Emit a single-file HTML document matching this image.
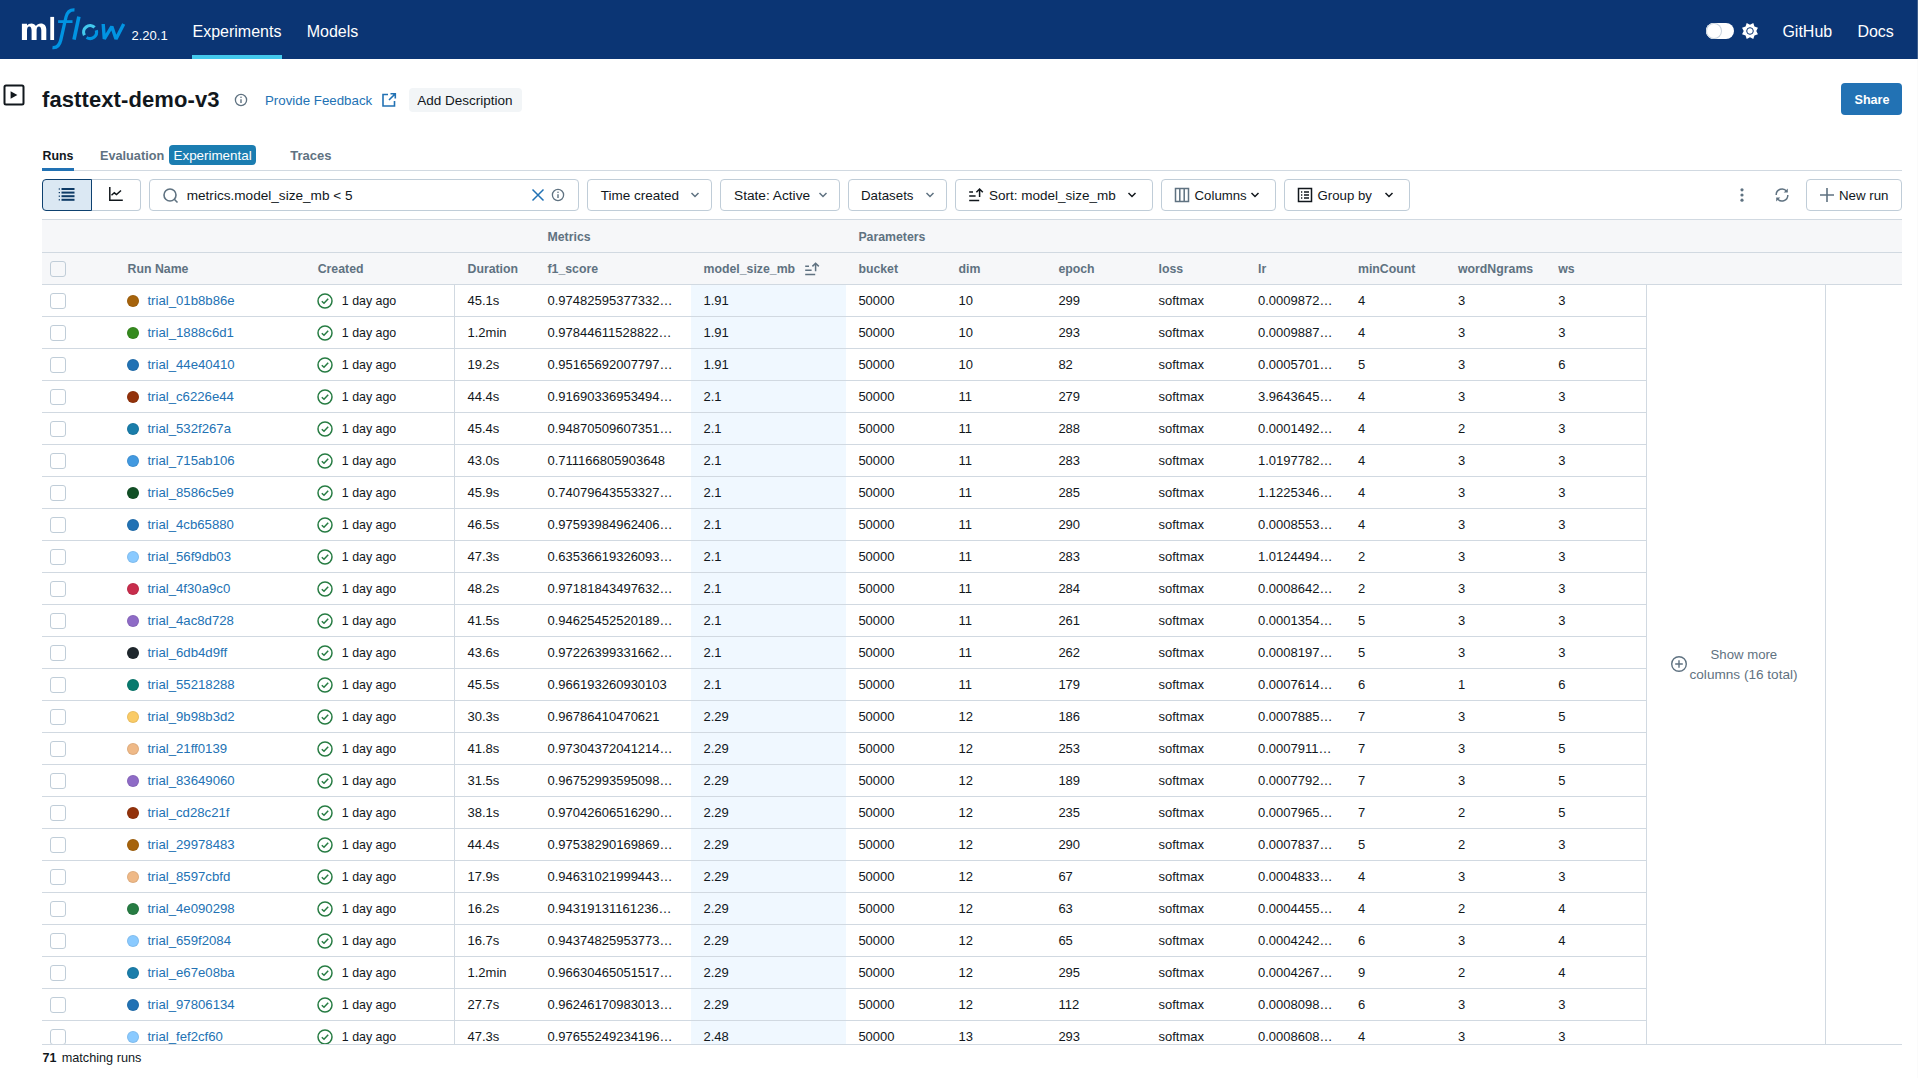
<!DOCTYPE html>
<html><head><meta charset="utf-8"><title>MLflow</title>
<style>
html,body{margin:0;padding:0;background:#fff;width:1918px;height:1078px;overflow:hidden;}
body{position:relative;font-family:"Liberation Sans", sans-serif;color:#11171C;}
.t{position:absolute;white-space:nowrap;}
.b{position:absolute;}
svg.b{overflow:visible}
</style></head><body>
<div class="b" style="left:0px;top:0px;width:1918px;height:59px;background:#0B3574"></div><svg class="b" style="left:18px;top:6px" width="112" height="46" viewBox="0 0 112 46" fill="none">
<g transform="translate(-18,-6)">
  <path d="M21.9 40 V23.8 H27 V25.6 C28 24.2 29.5 23.4 31.4 23.4 C33.4 23.4 35 24.3 35.9 26 C37 24.3 38.7 23.4 40.8 23.4 C44.2 23.4 46.3 25.6 46.3 29.6 V40 H41.3 V30.6 C41.3 27.9 40.4 26.4 38.9 26.4 C37.4 26.4 36.6 27.9 36.6 30.6 V40 H31.6 V30.6 C31.6 27.9 30.7 26.4 29.3 26.4 C27.8 26.4 27 27.9 27 30.6 V40 Z" fill="#fff"/>
  <path d="M50.3 16.9 H54.1 V40 H50.3 Z" fill="#fff"/>
  <path d="M52.5 47.5 C56.5 48 59.5 45.5 60.8 40 L66 17 C67.3 11.5 70 9.6 74.5 9.8" stroke="#0194E2" stroke-width="3.3" fill="none"/>
  <path d="M58.1 21.6 H72.5" stroke="#0194E2" stroke-width="2.8"/>
  <path d="M78.9 16.6 L74 39.7" stroke="#0194E2" stroke-width="3.6"/>
  <path d="M84.4 35.2 A6.5 6.5 0 0 1 94.6 27.4" stroke="#43C9ED" stroke-width="3.2" fill="none"/>
  <path d="M96.3 30.2 A6.5 6.5 0 0 1 86.6 37.5" stroke="#0194E2" stroke-width="3.2" fill="none"/>
  <path d="M103.2 24 L104.3 39 L111.8 26.5 L116 39 L123.7 24" stroke="#0194E2" stroke-width="3.4" fill="none" stroke-linejoin="bevel"/>
</g></svg><div class="t" style="left:131.5px;top:27px;font-size:13px;line-height:18px;color:#fff;">2.20.1</div><div class="t" style="left:192.5px;top:21px;font-size:16px;line-height:22px;color:#fff;">Experiments</div><div class="b" style="left:192px;top:55px;width:90px;height:4px;background:#43C9ED"></div><div class="t" style="left:306.7px;top:21px;font-size:16px;line-height:22px;color:#fff;">Models</div><div class="b" style="left:1706px;top:23px;width:28px;height:16px;background:#fff;border-radius:8px"></div><div class="b" style="left:1706px;top:23px;width:16px;height:16px;border-radius:50%;box-shadow:inset 0 0 0 1px #C9D3DD;background:#fff"></div><svg class="b" style="left:1741px;top:22px" width="18" height="18" viewBox="0 0 18 18" fill="none"><path d="M9.00 2.70 L12.29 1.05 L13.45 4.55 L16.95 5.71 L15.30 9.00 L16.95 12.29 L13.45 13.45 L12.29 16.95 L9.00 15.30 L5.71 16.95 L4.55 13.45 L1.05 12.29 L2.70 9.00 L1.05 5.71 L4.55 4.55 L5.71 1.05 Z" fill="#fff"/>
<circle cx="9" cy="9" r="3.3" stroke="#0B3574" stroke-width="1"/></svg><div class="t" style="left:1782.4px;top:21px;font-size:16px;line-height:22px;color:#fff;">GitHub</div><div class="t" style="left:1857.4px;top:21px;font-size:16px;line-height:22px;color:#fff;">Docs</div><div class="b" style="left:1917px;top:0px;width:1px;height:59px;background:#3F5F8C"></div><div class="b" style="left:1917px;top:59px;width:1px;height:1019px;background:#FBFBFB"></div><svg class="b" style="left:3px;top:84px" width="22" height="22" viewBox="0 0 22 22" fill="none"><rect x="1.5" y="1.5" width="19" height="19" rx="1.5" stroke="#11171C" stroke-width="2"/>
<path d="M7.6 7.2 L14.4 11 L7.6 14.8 Z" fill="#11171C"/></svg><div class="t" style="left:42px;top:84px;font-size:22px;line-height:31px;color:#11171C;font-weight:700;letter-spacing:0.1px;">fasttext-demo-v3</div><svg class="b" style="left:234px;top:93px" width="14" height="14" viewBox="0 0 14 14" fill="none"><circle cx="7" cy="7" r="5.6" stroke="#5F7281" stroke-width="1.3"/>
<path d="M7 6.2 V10" stroke="#5F7281" stroke-width="1.4"/><circle cx="7" cy="4.2" r="0.8" fill="#5F7281"/></svg><div class="t" style="left:265px;top:91px;font-size:13.3px;line-height:19px;color:#2272B4;">Provide Feedback</div><svg class="b" style="left:381px;top:92px" width="16" height="16" viewBox="0 0 16 16" fill="none"><path d="M7 2.5 H2 V14 H13.5 V9" stroke="#2272B4" stroke-width="1.6" fill="none"/>
<path d="M8 8 L14 2 M9.5 1.7 H14.3 V6.5" stroke="#2272B4" stroke-width="1.6" fill="none"/></svg><div class="b" style="left:409px;top:88px;width:113px;height:24px;background:#F2F5F7;border-radius:4px"></div><div class="t" style="left:417.3px;top:91px;font-size:13.5px;line-height:19px;color:#11171C;">Add Description</div><div class="b" style="left:1841px;top:83px;width:61px;height:32px;background:#2272B4;border-radius:4px"></div><div class="t" style="left:1854.5px;top:91px;font-size:12.6px;line-height:18px;color:#fff;font-weight:700;">Share</div><div class="t" style="left:42.5px;top:148px;font-size:12.4px;line-height:17px;color:#11171C;font-weight:700;">Runs</div><div class="b" style="left:42px;top:170px;width:1860px;height:1px;background:#D1D9E1"></div><div class="b" style="left:42px;top:168px;width:32px;height:3px;background:#2272B4"></div><div class="t" style="left:100px;top:147px;font-size:12.7px;line-height:18px;color:#5F7281;font-weight:700;">Evaluation</div><div class="b" style="left:169px;top:145px;width:87px;height:20px;background:#1B7DB1;border-radius:4px"></div><div class="t" style="left:173.5px;top:146px;font-size:13.4px;line-height:19px;color:#fff;">Experimental</div><div class="t" style="left:290.3px;top:147px;font-size:13px;line-height:18px;color:#5F7281;font-weight:700;">Traces</div><div class="b" style="left:91px;top:179px;width:50px;height:32px;box-sizing:border-box;border:1px solid #C0CDD8;border-left:none;border-radius:0 4px 4px 0;background:#fff"></div><div class="b" style="left:42px;top:179px;width:50px;height:32px;box-sizing:border-box;border:1px solid #0E4170;border-radius:4px 0 0 4px;background:#DBE8F3"></div><svg class="b" style="left:58px;top:187px" width="18" height="14" viewBox="0 0 18 14" fill="none"><g fill="#0E3B66">
<rect x="3.5" y="1" width="13" height="2"/><rect x="3.5" y="4.6" width="13" height="2"/><rect x="3.5" y="8.2" width="13" height="2"/><rect x="3.5" y="11.8" width="13" height="2"/>
<rect x="0.7" y="1.4" width="1.3" height="1.2"/><rect x="0.7" y="5" width="1.3" height="1.2"/><rect x="0.7" y="8.6" width="1.3" height="1.2"/><rect x="0.7" y="12.2" width="1.3" height="1.2"/>
</g></svg><svg class="b" style="left:108px;top:186px" width="16" height="16" viewBox="0 0 16 16" fill="none"><path d="M1.8 1 V14.2 H14.8" stroke="#11171C" stroke-width="1.5" fill="none"/>
<path d="M3.5 9.2 L6.3 6.8 L8.5 8.6 L13 4.5" stroke="#11171C" stroke-width="1.5" fill="none"/></svg><div class="b" style="left:149px;top:179px;width:430px;height:32px;box-sizing:border-box;border:1px solid #C0CDD8;border-radius:4px;background:#fff"></div><svg class="b" style="left:162px;top:187px" width="18" height="18" viewBox="0 0 18 18" fill="none"><circle cx="8" cy="8" r="6" stroke="#5F7281" stroke-width="1.6"/><path d="M12.3 12.3 L15.5 15.5" stroke="#5F7281" stroke-width="1.6"/></svg><div class="t" style="left:186.7px;top:186px;font-size:13.6px;line-height:19px;color:#11171C;">metrics.model_size_mb &lt; 5</div><svg class="b" style="left:531px;top:188px" width="14" height="14" viewBox="0 0 14 14" fill="none"><path d="M1.5 1.5 L12.5 12.5 M12.5 1.5 L1.5 12.5" stroke="#2272B4" stroke-width="1.5"/></svg><svg class="b" style="left:551px;top:188px" width="14" height="14" viewBox="0 0 14 14" fill="none"><circle cx="7" cy="7" r="5.6" stroke="#5F7281" stroke-width="1.3"/>
<path d="M7 6.2 V10" stroke="#5F7281" stroke-width="1.4"/><circle cx="7" cy="4.2" r="0.8" fill="#5F7281"/></svg><div class="b" style="left:587px;top:179px;width:125px;height:32px;box-sizing:border-box;border:1px solid #C0CDD8;border-radius:4px;background:#fff"></div><div class="t" style="left:600.7px;top:186px;font-size:13.5px;line-height:19px;color:#11171C;">Time created</div><svg class="b" style="left:690px;top:191px" width="10" height="8" viewBox="0 0 10 8" fill="none"><path d="M1.5 2 L5 5.5 L8.5 2" stroke="#5F7281" stroke-width="1.5" fill="none"/></svg><div class="b" style="left:720px;top:179px;width:120px;height:32px;box-sizing:border-box;border:1px solid #C0CDD8;border-radius:4px;background:#fff"></div><div class="t" style="left:734px;top:186px;font-size:13.7px;line-height:19px;color:#11171C;">State: Active</div><svg class="b" style="left:818px;top:191px" width="10" height="8" viewBox="0 0 10 8" fill="none"><path d="M1.5 2 L5 5.5 L8.5 2" stroke="#5F7281" stroke-width="1.5" fill="none"/></svg><div class="b" style="left:848px;top:179px;width:99px;height:32px;box-sizing:border-box;border:1px solid #C0CDD8;border-radius:4px;background:#fff"></div><div class="t" style="left:861px;top:186px;font-size:13.3px;line-height:19px;color:#11171C;">Datasets</div><svg class="b" style="left:925px;top:191px" width="10" height="8" viewBox="0 0 10 8" fill="none"><path d="M1.5 2 L5 5.5 L8.5 2" stroke="#5F7281" stroke-width="1.5" fill="none"/></svg><div class="b" style="left:955px;top:179px;width:198px;height:32px;box-sizing:border-box;border:1px solid #C0CDD8;border-radius:4px;background:#fff"></div><svg class="b" style="left:968px;top:187px" width="17" height="15" viewBox="0 0 17 15" fill="none"><g transform="translate(1,0.8)"><path d="M0.2 4.2 H4 M0.2 8.3 H6.6 M0.2 12.6 H10.2" stroke="#11171C" stroke-width="1.5"/>
<path d="M10.6 9.2 V1.4 M7.4 4.4 L10.6 1.2 L13.8 4.4" stroke="#11171C" stroke-width="1.5" fill="none"/></g></svg><div class="t" style="left:989px;top:186px;font-size:13.5px;line-height:19px;color:#11171C;">Sort: model_size_mb</div><svg class="b" style="left:1127px;top:191px" width="10" height="8" viewBox="0 0 10 8" fill="none"><path d="M1.5 2 L5 5.5 L8.5 2" stroke="#11171C" stroke-width="1.5" fill="none"/></svg><div class="b" style="left:1161px;top:179px;width:115px;height:32px;box-sizing:border-box;border:1px solid #C0CDD8;border-radius:4px;background:#fff"></div><svg class="b" style="left:1174px;top:187px" width="16" height="16" viewBox="0 0 16 16" fill="none"><rect x="1.5" y="1.5" width="13" height="13" stroke="#5F7281" stroke-width="1.5"/>
<path d="M5.8 1.5 V14.5 M10.2 1.5 V14.5" stroke="#5F7281" stroke-width="1.5"/></svg><div class="t" style="left:1194.6px;top:187px;font-size:13.2px;line-height:18px;color:#11171C;">Columns</div><svg class="b" style="left:1250px;top:191px" width="10" height="8" viewBox="0 0 10 8" fill="none"><path d="M1.5 2 L5 5.5 L8.5 2" stroke="#11171C" stroke-width="1.5" fill="none"/></svg><div class="b" style="left:1284px;top:179px;width:126px;height:32px;box-sizing:border-box;border:1px solid #C0CDD8;border-radius:4px;background:#fff"></div><svg class="b" style="left:1297px;top:187px" width="16" height="16" viewBox="0 0 16 16" fill="none"><rect x="1.5" y="1.5" width="13" height="13" stroke="#11171C" stroke-width="1.5"/>
<path d="M7 5 H12 M7 8 H12 M7 11 H12 M4 5 H5.3 M4 8 H5.3 M4 11 H5.3" stroke="#11171C" stroke-width="1.3"/></svg><div class="t" style="left:1317.6px;top:187px;font-size:13.2px;line-height:18px;color:#11171C;">Group by</div><svg class="b" style="left:1384px;top:191px" width="10" height="8" viewBox="0 0 10 8" fill="none"><path d="M1.5 2 L5 5.5 L8.5 2" stroke="#11171C" stroke-width="1.5" fill="none"/></svg><svg class="b" style="left:1739px;top:187px" width="6" height="16" viewBox="0 0 6 16" fill="none"><g fill="#5F7281"><circle cx="3" cy="2.8" r="1.6"/><circle cx="3" cy="8" r="1.6"/><circle cx="3" cy="13.2" r="1.6"/></g></svg><svg class="b" style="left:1774px;top:187px" width="16" height="16" viewBox="0 0 16 16" fill="none"><path d="M2.2 8 A5.8 5.8 0 0 1 12.8 4.6 M13.8 8 A5.8 5.8 0 0 1 3.2 11.4" stroke="#5F7281" stroke-width="1.5" fill="none"/>
<path d="M13.8 1.5 V5.6 H9.7 Z M2.2 14.5 V10.4 H6.3 Z" fill="#5F7281"/></svg><div class="b" style="left:1806px;top:179px;width:96px;height:32px;box-sizing:border-box;border:1px solid #C0CDD8;border-radius:4px;background:#fff"></div><svg class="b" style="left:1819px;top:187px" width="16" height="16" viewBox="0 0 16 16" fill="none"><path d="M8 1 V15 M1 8 H15" stroke="#5F7281" stroke-width="1.6"/></svg><div class="t" style="left:1839px;top:186px;font-size:13.3px;line-height:19px;color:#11171C;">New run</div><div class="b" style="left:42px;top:219px;width:1860px;height:1px;background:#D1D9E1"></div><div class="b" style="left:42px;top:220px;width:1860px;height:64px;background:#F6F7F9"></div><div class="b" style="left:42px;top:252px;width:1860px;height:1px;background:#D1D9E1"></div><div class="b" style="left:42px;top:284px;width:1860px;height:1px;background:#D1D9E1"></div><div class="t" style="left:547.5px;top:229px;font-size:12.3px;line-height:17px;color:#5F7281;font-weight:700;">Metrics</div><div class="t" style="left:858.4px;top:229px;font-size:12.3px;line-height:17px;color:#5F7281;font-weight:700;">Parameters</div><div class="b" style="left:50px;top:261px;width:16px;height:16px;box-sizing:border-box;border:1px solid #C0CDD8;border-radius:3px;background:transparent"></div><div class="t" style="left:127.6px;top:261px;font-size:12.3px;line-height:17px;color:#5F7281;font-weight:700;">Run Name</div><div class="t" style="left:317.7px;top:261px;font-size:12.3px;line-height:17px;color:#5F7281;font-weight:700;">Created</div><div class="t" style="left:467.5px;top:261px;font-size:12.3px;line-height:17px;color:#5F7281;font-weight:700;">Duration</div><div class="t" style="left:547.5px;top:261px;font-size:12.3px;line-height:17px;color:#5F7281;font-weight:700;">f1_score</div><div class="t" style="left:703.5px;top:261px;font-size:12.3px;line-height:17px;color:#5F7281;font-weight:700;">model_size_mb</div><div class="t" style="left:858.4px;top:261px;font-size:12.3px;line-height:17px;color:#5F7281;font-weight:700;">bucket</div><div class="t" style="left:958.5px;top:261px;font-size:12.3px;line-height:17px;color:#5F7281;font-weight:700;">dim</div><div class="t" style="left:1058.4px;top:261px;font-size:12.3px;line-height:17px;color:#5F7281;font-weight:700;">epoch</div><div class="t" style="left:1158.5px;top:261px;font-size:12.3px;line-height:17px;color:#5F7281;font-weight:700;">loss</div><div class="t" style="left:1258px;top:261px;font-size:12.3px;line-height:17px;color:#5F7281;font-weight:700;">lr</div><div class="t" style="left:1358px;top:261px;font-size:12.3px;line-height:17px;color:#5F7281;font-weight:700;">minCount</div><div class="t" style="left:1458px;top:261px;font-size:12.3px;line-height:17px;color:#5F7281;font-weight:700;">wordNgrams</div><div class="t" style="left:1558.3px;top:261px;font-size:12.3px;line-height:17px;color:#5F7281;font-weight:700;">ws</div><svg class="b" style="left:804px;top:261px" width="17" height="15" viewBox="0 0 17 15" fill="none"><g transform="translate(1,1)"><path d="M0.2 4.2 H4 M0.2 8.3 H6.6 M0.2 12.6 H10.2" stroke="#5F7281" stroke-width="1.5"/>
<path d="M10.6 9.2 V1.4 M7.4 4.4 L10.6 1.2 L13.8 4.4" stroke="#5F7281" stroke-width="1.5" fill="none"/></g></svg><div class="b" style="left:0;top:285px;width:1918px;height:759px;overflow:hidden"><div class="b" style="left:691px;top:0px;width:155px;height:1000px;background:#F0F8FF"></div><div class="b" style="left:454px;top:0px;width:1px;height:1000px;background:#D1D9E1"></div><div class="b" style="left:1646px;top:0px;width:1px;height:1000px;background:#D1D9E1"></div><div class="b" style="left:1825px;top:0px;width:1px;height:1000px;background:#D1D9E1"></div><div class="b" style="left:50px;top:8px;width:16px;height:16px;box-sizing:border-box;border:1px solid #C0CDD8;border-radius:3px;background:#fff"></div><div class="b" style="left:127px;top:10px;width:12px;height:12px;border-radius:50%;background:#A6630C;box-shadow:inset 0 0 0 1px rgba(0,0,0,0.07)"></div><div class="t" style="left:147.4px;top:7px;font-size:13.2px;line-height:18px;color:#2272B4;">trial_01b8b86e</div><svg class="b" style="left:317px;top:8px" width="16" height="16" viewBox="0 0 16 16" fill="none"><circle cx="8" cy="8" r="7" stroke="#277C43" stroke-width="1.5"/><path d="M4.8 8.2 L7 10.3 L11.2 5.8" stroke="#277C43" stroke-width="1.5" fill="none"/></svg><div class="t" style="left:341.8px;top:8px;font-size:12.4px;line-height:17px;color:#11171C;">1 day ago</div><div class="t" style="left:467.5px;top:7px;font-size:13px;line-height:18px;color:#11171C;">45.1s</div><div class="t" style="left:547.5px;top:7px;font-size:13px;line-height:18px;color:#11171C;">0.97482595377332…</div><div class="t" style="left:703.5px;top:7px;font-size:13px;line-height:18px;color:#11171C;">1.91</div><div class="t" style="left:858.4px;top:7px;font-size:13px;line-height:18px;color:#11171C;">50000</div><div class="t" style="left:958.5px;top:7px;font-size:13px;line-height:18px;color:#11171C;">10</div><div class="t" style="left:1058.4px;top:7px;font-size:13px;line-height:18px;color:#11171C;">299</div><div class="t" style="left:1158.5px;top:7px;font-size:13px;line-height:18px;color:#11171C;">softmax</div><div class="t" style="left:1258px;top:7px;font-size:13px;line-height:18px;color:#11171C;">0.0009872…</div><div class="t" style="left:1358px;top:7px;font-size:13px;line-height:18px;color:#11171C;">4</div><div class="t" style="left:1458px;top:7px;font-size:13px;line-height:18px;color:#11171C;">3</div><div class="t" style="left:1558.3px;top:7px;font-size:13px;line-height:18px;color:#11171C;">3</div><div class="b" style="left:42px;top:31px;width:1604px;height:1px;background:#D1D9E1"></div><div class="b" style="left:50px;top:40px;width:16px;height:16px;box-sizing:border-box;border:1px solid #C0CDD8;border-radius:3px;background:#fff"></div><div class="b" style="left:127px;top:42px;width:12px;height:12px;border-radius:50%;background:#358A1E;box-shadow:inset 0 0 0 1px rgba(0,0,0,0.07)"></div><div class="t" style="left:147.4px;top:39px;font-size:13.2px;line-height:18px;color:#2272B4;">trial_1888c6d1</div><svg class="b" style="left:317px;top:40px" width="16" height="16" viewBox="0 0 16 16" fill="none"><circle cx="8" cy="8" r="7" stroke="#277C43" stroke-width="1.5"/><path d="M4.8 8.2 L7 10.3 L11.2 5.8" stroke="#277C43" stroke-width="1.5" fill="none"/></svg><div class="t" style="left:341.8px;top:40px;font-size:12.4px;line-height:17px;color:#11171C;">1 day ago</div><div class="t" style="left:467.5px;top:39px;font-size:13px;line-height:18px;color:#11171C;">1.2min</div><div class="t" style="left:547.5px;top:39px;font-size:13px;line-height:18px;color:#11171C;">0.97844611528822…</div><div class="t" style="left:703.5px;top:39px;font-size:13px;line-height:18px;color:#11171C;">1.91</div><div class="t" style="left:858.4px;top:39px;font-size:13px;line-height:18px;color:#11171C;">50000</div><div class="t" style="left:958.5px;top:39px;font-size:13px;line-height:18px;color:#11171C;">10</div><div class="t" style="left:1058.4px;top:39px;font-size:13px;line-height:18px;color:#11171C;">293</div><div class="t" style="left:1158.5px;top:39px;font-size:13px;line-height:18px;color:#11171C;">softmax</div><div class="t" style="left:1258px;top:39px;font-size:13px;line-height:18px;color:#11171C;">0.0009887…</div><div class="t" style="left:1358px;top:39px;font-size:13px;line-height:18px;color:#11171C;">4</div><div class="t" style="left:1458px;top:39px;font-size:13px;line-height:18px;color:#11171C;">3</div><div class="t" style="left:1558.3px;top:39px;font-size:13px;line-height:18px;color:#11171C;">3</div><div class="b" style="left:42px;top:63px;width:1604px;height:1px;background:#D1D9E1"></div><div class="b" style="left:50px;top:72px;width:16px;height:16px;box-sizing:border-box;border:1px solid #C0CDD8;border-radius:3px;background:#fff"></div><div class="b" style="left:127px;top:74px;width:12px;height:12px;border-radius:50%;background:#2272B4;box-shadow:inset 0 0 0 1px rgba(0,0,0,0.07)"></div><div class="t" style="left:147.4px;top:71px;font-size:13.2px;line-height:18px;color:#2272B4;">trial_44e40410</div><svg class="b" style="left:317px;top:72px" width="16" height="16" viewBox="0 0 16 16" fill="none"><circle cx="8" cy="8" r="7" stroke="#277C43" stroke-width="1.5"/><path d="M4.8 8.2 L7 10.3 L11.2 5.8" stroke="#277C43" stroke-width="1.5" fill="none"/></svg><div class="t" style="left:341.8px;top:72px;font-size:12.4px;line-height:17px;color:#11171C;">1 day ago</div><div class="t" style="left:467.5px;top:71px;font-size:13px;line-height:18px;color:#11171C;">19.2s</div><div class="t" style="left:547.5px;top:71px;font-size:13px;line-height:18px;color:#11171C;">0.95165692007797…</div><div class="t" style="left:703.5px;top:71px;font-size:13px;line-height:18px;color:#11171C;">1.91</div><div class="t" style="left:858.4px;top:71px;font-size:13px;line-height:18px;color:#11171C;">50000</div><div class="t" style="left:958.5px;top:71px;font-size:13px;line-height:18px;color:#11171C;">10</div><div class="t" style="left:1058.4px;top:71px;font-size:13px;line-height:18px;color:#11171C;">82</div><div class="t" style="left:1158.5px;top:71px;font-size:13px;line-height:18px;color:#11171C;">softmax</div><div class="t" style="left:1258px;top:71px;font-size:13px;line-height:18px;color:#11171C;">0.0005701…</div><div class="t" style="left:1358px;top:71px;font-size:13px;line-height:18px;color:#11171C;">5</div><div class="t" style="left:1458px;top:71px;font-size:13px;line-height:18px;color:#11171C;">3</div><div class="t" style="left:1558.3px;top:71px;font-size:13px;line-height:18px;color:#11171C;">6</div><div class="b" style="left:42px;top:95px;width:1604px;height:1px;background:#D1D9E1"></div><div class="b" style="left:50px;top:104px;width:16px;height:16px;box-sizing:border-box;border:1px solid #C0CDD8;border-radius:3px;background:#fff"></div><div class="b" style="left:127px;top:106px;width:12px;height:12px;border-radius:50%;background:#93320B;box-shadow:inset 0 0 0 1px rgba(0,0,0,0.07)"></div><div class="t" style="left:147.4px;top:103px;font-size:13.2px;line-height:18px;color:#2272B4;">trial_c6226e44</div><svg class="b" style="left:317px;top:104px" width="16" height="16" viewBox="0 0 16 16" fill="none"><circle cx="8" cy="8" r="7" stroke="#277C43" stroke-width="1.5"/><path d="M4.8 8.2 L7 10.3 L11.2 5.8" stroke="#277C43" stroke-width="1.5" fill="none"/></svg><div class="t" style="left:341.8px;top:104px;font-size:12.4px;line-height:17px;color:#11171C;">1 day ago</div><div class="t" style="left:467.5px;top:103px;font-size:13px;line-height:18px;color:#11171C;">44.4s</div><div class="t" style="left:547.5px;top:103px;font-size:13px;line-height:18px;color:#11171C;">0.91690336953494…</div><div class="t" style="left:703.5px;top:103px;font-size:13px;line-height:18px;color:#11171C;">2.1</div><div class="t" style="left:858.4px;top:103px;font-size:13px;line-height:18px;color:#11171C;">50000</div><div class="t" style="left:958.5px;top:103px;font-size:13px;line-height:18px;color:#11171C;">11</div><div class="t" style="left:1058.4px;top:103px;font-size:13px;line-height:18px;color:#11171C;">279</div><div class="t" style="left:1158.5px;top:103px;font-size:13px;line-height:18px;color:#11171C;">softmax</div><div class="t" style="left:1258px;top:103px;font-size:13px;line-height:18px;color:#11171C;">3.9643645…</div><div class="t" style="left:1358px;top:103px;font-size:13px;line-height:18px;color:#11171C;">4</div><div class="t" style="left:1458px;top:103px;font-size:13px;line-height:18px;color:#11171C;">3</div><div class="t" style="left:1558.3px;top:103px;font-size:13px;line-height:18px;color:#11171C;">3</div><div class="b" style="left:42px;top:127px;width:1604px;height:1px;background:#D1D9E1"></div><div class="b" style="left:50px;top:136px;width:16px;height:16px;box-sizing:border-box;border:1px solid #C0CDD8;border-radius:3px;background:#fff"></div><div class="b" style="left:127px;top:138px;width:12px;height:12px;border-radius:50%;background:#1A7DAA;box-shadow:inset 0 0 0 1px rgba(0,0,0,0.07)"></div><div class="t" style="left:147.4px;top:135px;font-size:13.2px;line-height:18px;color:#2272B4;">trial_532f267a</div><svg class="b" style="left:317px;top:136px" width="16" height="16" viewBox="0 0 16 16" fill="none"><circle cx="8" cy="8" r="7" stroke="#277C43" stroke-width="1.5"/><path d="M4.8 8.2 L7 10.3 L11.2 5.8" stroke="#277C43" stroke-width="1.5" fill="none"/></svg><div class="t" style="left:341.8px;top:136px;font-size:12.4px;line-height:17px;color:#11171C;">1 day ago</div><div class="t" style="left:467.5px;top:135px;font-size:13px;line-height:18px;color:#11171C;">45.4s</div><div class="t" style="left:547.5px;top:135px;font-size:13px;line-height:18px;color:#11171C;">0.94870509607351…</div><div class="t" style="left:703.5px;top:135px;font-size:13px;line-height:18px;color:#11171C;">2.1</div><div class="t" style="left:858.4px;top:135px;font-size:13px;line-height:18px;color:#11171C;">50000</div><div class="t" style="left:958.5px;top:135px;font-size:13px;line-height:18px;color:#11171C;">11</div><div class="t" style="left:1058.4px;top:135px;font-size:13px;line-height:18px;color:#11171C;">288</div><div class="t" style="left:1158.5px;top:135px;font-size:13px;line-height:18px;color:#11171C;">softmax</div><div class="t" style="left:1258px;top:135px;font-size:13px;line-height:18px;color:#11171C;">0.0001492…</div><div class="t" style="left:1358px;top:135px;font-size:13px;line-height:18px;color:#11171C;">4</div><div class="t" style="left:1458px;top:135px;font-size:13px;line-height:18px;color:#11171C;">2</div><div class="t" style="left:1558.3px;top:135px;font-size:13px;line-height:18px;color:#11171C;">3</div><div class="b" style="left:42px;top:159px;width:1604px;height:1px;background:#D1D9E1"></div><div class="b" style="left:50px;top:168px;width:16px;height:16px;box-sizing:border-box;border:1px solid #C0CDD8;border-radius:3px;background:#fff"></div><div class="b" style="left:127px;top:170px;width:12px;height:12px;border-radius:50%;background:#4299E0;box-shadow:inset 0 0 0 1px rgba(0,0,0,0.07)"></div><div class="t" style="left:147.4px;top:167px;font-size:13.2px;line-height:18px;color:#2272B4;">trial_715ab106</div><svg class="b" style="left:317px;top:168px" width="16" height="16" viewBox="0 0 16 16" fill="none"><circle cx="8" cy="8" r="7" stroke="#277C43" stroke-width="1.5"/><path d="M4.8 8.2 L7 10.3 L11.2 5.8" stroke="#277C43" stroke-width="1.5" fill="none"/></svg><div class="t" style="left:341.8px;top:168px;font-size:12.4px;line-height:17px;color:#11171C;">1 day ago</div><div class="t" style="left:467.5px;top:167px;font-size:13px;line-height:18px;color:#11171C;">43.0s</div><div class="t" style="left:547.5px;top:167px;font-size:13px;line-height:18px;color:#11171C;">0.711166805903648</div><div class="t" style="left:703.5px;top:167px;font-size:13px;line-height:18px;color:#11171C;">2.1</div><div class="t" style="left:858.4px;top:167px;font-size:13px;line-height:18px;color:#11171C;">50000</div><div class="t" style="left:958.5px;top:167px;font-size:13px;line-height:18px;color:#11171C;">11</div><div class="t" style="left:1058.4px;top:167px;font-size:13px;line-height:18px;color:#11171C;">283</div><div class="t" style="left:1158.5px;top:167px;font-size:13px;line-height:18px;color:#11171C;">softmax</div><div class="t" style="left:1258px;top:167px;font-size:13px;line-height:18px;color:#11171C;">1.0197782…</div><div class="t" style="left:1358px;top:167px;font-size:13px;line-height:18px;color:#11171C;">4</div><div class="t" style="left:1458px;top:167px;font-size:13px;line-height:18px;color:#11171C;">3</div><div class="t" style="left:1558.3px;top:167px;font-size:13px;line-height:18px;color:#11171C;">3</div><div class="b" style="left:42px;top:191px;width:1604px;height:1px;background:#D1D9E1"></div><div class="b" style="left:50px;top:200px;width:16px;height:16px;box-sizing:border-box;border:1px solid #C0CDD8;border-radius:3px;background:#fff"></div><div class="b" style="left:127px;top:202px;width:12px;height:12px;border-radius:50%;background:#115026;box-shadow:inset 0 0 0 1px rgba(0,0,0,0.07)"></div><div class="t" style="left:147.4px;top:199px;font-size:13.2px;line-height:18px;color:#2272B4;">trial_8586c5e9</div><svg class="b" style="left:317px;top:200px" width="16" height="16" viewBox="0 0 16 16" fill="none"><circle cx="8" cy="8" r="7" stroke="#277C43" stroke-width="1.5"/><path d="M4.8 8.2 L7 10.3 L11.2 5.8" stroke="#277C43" stroke-width="1.5" fill="none"/></svg><div class="t" style="left:341.8px;top:200px;font-size:12.4px;line-height:17px;color:#11171C;">1 day ago</div><div class="t" style="left:467.5px;top:199px;font-size:13px;line-height:18px;color:#11171C;">45.9s</div><div class="t" style="left:547.5px;top:199px;font-size:13px;line-height:18px;color:#11171C;">0.74079643553327…</div><div class="t" style="left:703.5px;top:199px;font-size:13px;line-height:18px;color:#11171C;">2.1</div><div class="t" style="left:858.4px;top:199px;font-size:13px;line-height:18px;color:#11171C;">50000</div><div class="t" style="left:958.5px;top:199px;font-size:13px;line-height:18px;color:#11171C;">11</div><div class="t" style="left:1058.4px;top:199px;font-size:13px;line-height:18px;color:#11171C;">285</div><div class="t" style="left:1158.5px;top:199px;font-size:13px;line-height:18px;color:#11171C;">softmax</div><div class="t" style="left:1258px;top:199px;font-size:13px;line-height:18px;color:#11171C;">1.1225346…</div><div class="t" style="left:1358px;top:199px;font-size:13px;line-height:18px;color:#11171C;">4</div><div class="t" style="left:1458px;top:199px;font-size:13px;line-height:18px;color:#11171C;">3</div><div class="t" style="left:1558.3px;top:199px;font-size:13px;line-height:18px;color:#11171C;">3</div><div class="b" style="left:42px;top:223px;width:1604px;height:1px;background:#D1D9E1"></div><div class="b" style="left:50px;top:232px;width:16px;height:16px;box-sizing:border-box;border:1px solid #C0CDD8;border-radius:3px;background:#fff"></div><div class="b" style="left:127px;top:234px;width:12px;height:12px;border-radius:50%;background:#2272B4;box-shadow:inset 0 0 0 1px rgba(0,0,0,0.07)"></div><div class="t" style="left:147.4px;top:231px;font-size:13.2px;line-height:18px;color:#2272B4;">trial_4cb65880</div><svg class="b" style="left:317px;top:232px" width="16" height="16" viewBox="0 0 16 16" fill="none"><circle cx="8" cy="8" r="7" stroke="#277C43" stroke-width="1.5"/><path d="M4.8 8.2 L7 10.3 L11.2 5.8" stroke="#277C43" stroke-width="1.5" fill="none"/></svg><div class="t" style="left:341.8px;top:232px;font-size:12.4px;line-height:17px;color:#11171C;">1 day ago</div><div class="t" style="left:467.5px;top:231px;font-size:13px;line-height:18px;color:#11171C;">46.5s</div><div class="t" style="left:547.5px;top:231px;font-size:13px;line-height:18px;color:#11171C;">0.97593984962406…</div><div class="t" style="left:703.5px;top:231px;font-size:13px;line-height:18px;color:#11171C;">2.1</div><div class="t" style="left:858.4px;top:231px;font-size:13px;line-height:18px;color:#11171C;">50000</div><div class="t" style="left:958.5px;top:231px;font-size:13px;line-height:18px;color:#11171C;">11</div><div class="t" style="left:1058.4px;top:231px;font-size:13px;line-height:18px;color:#11171C;">290</div><div class="t" style="left:1158.5px;top:231px;font-size:13px;line-height:18px;color:#11171C;">softmax</div><div class="t" style="left:1258px;top:231px;font-size:13px;line-height:18px;color:#11171C;">0.0008553…</div><div class="t" style="left:1358px;top:231px;font-size:13px;line-height:18px;color:#11171C;">4</div><div class="t" style="left:1458px;top:231px;font-size:13px;line-height:18px;color:#11171C;">3</div><div class="t" style="left:1558.3px;top:231px;font-size:13px;line-height:18px;color:#11171C;">3</div><div class="b" style="left:42px;top:255px;width:1604px;height:1px;background:#D1D9E1"></div><div class="b" style="left:50px;top:264px;width:16px;height:16px;box-sizing:border-box;border:1px solid #C0CDD8;border-radius:3px;background:#fff"></div><div class="b" style="left:127px;top:266px;width:12px;height:12px;border-radius:50%;background:#8ACAFF;box-shadow:inset 0 0 0 1px rgba(0,0,0,0.07)"></div><div class="t" style="left:147.4px;top:263px;font-size:13.2px;line-height:18px;color:#2272B4;">trial_56f9db03</div><svg class="b" style="left:317px;top:264px" width="16" height="16" viewBox="0 0 16 16" fill="none"><circle cx="8" cy="8" r="7" stroke="#277C43" stroke-width="1.5"/><path d="M4.8 8.2 L7 10.3 L11.2 5.8" stroke="#277C43" stroke-width="1.5" fill="none"/></svg><div class="t" style="left:341.8px;top:264px;font-size:12.4px;line-height:17px;color:#11171C;">1 day ago</div><div class="t" style="left:467.5px;top:263px;font-size:13px;line-height:18px;color:#11171C;">47.3s</div><div class="t" style="left:547.5px;top:263px;font-size:13px;line-height:18px;color:#11171C;">0.63536619326093…</div><div class="t" style="left:703.5px;top:263px;font-size:13px;line-height:18px;color:#11171C;">2.1</div><div class="t" style="left:858.4px;top:263px;font-size:13px;line-height:18px;color:#11171C;">50000</div><div class="t" style="left:958.5px;top:263px;font-size:13px;line-height:18px;color:#11171C;">11</div><div class="t" style="left:1058.4px;top:263px;font-size:13px;line-height:18px;color:#11171C;">283</div><div class="t" style="left:1158.5px;top:263px;font-size:13px;line-height:18px;color:#11171C;">softmax</div><div class="t" style="left:1258px;top:263px;font-size:13px;line-height:18px;color:#11171C;">1.0124494…</div><div class="t" style="left:1358px;top:263px;font-size:13px;line-height:18px;color:#11171C;">2</div><div class="t" style="left:1458px;top:263px;font-size:13px;line-height:18px;color:#11171C;">3</div><div class="t" style="left:1558.3px;top:263px;font-size:13px;line-height:18px;color:#11171C;">3</div><div class="b" style="left:42px;top:287px;width:1604px;height:1px;background:#D1D9E1"></div><div class="b" style="left:50px;top:296px;width:16px;height:16px;box-sizing:border-box;border:1px solid #C0CDD8;border-radius:3px;background:#fff"></div><div class="b" style="left:127px;top:298px;width:12px;height:12px;border-radius:50%;background:#C82D4C;box-shadow:inset 0 0 0 1px rgba(0,0,0,0.07)"></div><div class="t" style="left:147.4px;top:295px;font-size:13.2px;line-height:18px;color:#2272B4;">trial_4f30a9c0</div><svg class="b" style="left:317px;top:296px" width="16" height="16" viewBox="0 0 16 16" fill="none"><circle cx="8" cy="8" r="7" stroke="#277C43" stroke-width="1.5"/><path d="M4.8 8.2 L7 10.3 L11.2 5.8" stroke="#277C43" stroke-width="1.5" fill="none"/></svg><div class="t" style="left:341.8px;top:296px;font-size:12.4px;line-height:17px;color:#11171C;">1 day ago</div><div class="t" style="left:467.5px;top:295px;font-size:13px;line-height:18px;color:#11171C;">48.2s</div><div class="t" style="left:547.5px;top:295px;font-size:13px;line-height:18px;color:#11171C;">0.97181843497632…</div><div class="t" style="left:703.5px;top:295px;font-size:13px;line-height:18px;color:#11171C;">2.1</div><div class="t" style="left:858.4px;top:295px;font-size:13px;line-height:18px;color:#11171C;">50000</div><div class="t" style="left:958.5px;top:295px;font-size:13px;line-height:18px;color:#11171C;">11</div><div class="t" style="left:1058.4px;top:295px;font-size:13px;line-height:18px;color:#11171C;">284</div><div class="t" style="left:1158.5px;top:295px;font-size:13px;line-height:18px;color:#11171C;">softmax</div><div class="t" style="left:1258px;top:295px;font-size:13px;line-height:18px;color:#11171C;">0.0008642…</div><div class="t" style="left:1358px;top:295px;font-size:13px;line-height:18px;color:#11171C;">2</div><div class="t" style="left:1458px;top:295px;font-size:13px;line-height:18px;color:#11171C;">3</div><div class="t" style="left:1558.3px;top:295px;font-size:13px;line-height:18px;color:#11171C;">3</div><div class="b" style="left:42px;top:319px;width:1604px;height:1px;background:#D1D9E1"></div><div class="b" style="left:50px;top:328px;width:16px;height:16px;box-sizing:border-box;border:1px solid #C0CDD8;border-radius:3px;background:#fff"></div><div class="b" style="left:127px;top:330px;width:12px;height:12px;border-radius:50%;background:#8E6BC6;box-shadow:inset 0 0 0 1px rgba(0,0,0,0.07)"></div><div class="t" style="left:147.4px;top:327px;font-size:13.2px;line-height:18px;color:#2272B4;">trial_4ac8d728</div><svg class="b" style="left:317px;top:328px" width="16" height="16" viewBox="0 0 16 16" fill="none"><circle cx="8" cy="8" r="7" stroke="#277C43" stroke-width="1.5"/><path d="M4.8 8.2 L7 10.3 L11.2 5.8" stroke="#277C43" stroke-width="1.5" fill="none"/></svg><div class="t" style="left:341.8px;top:328px;font-size:12.4px;line-height:17px;color:#11171C;">1 day ago</div><div class="t" style="left:467.5px;top:327px;font-size:13px;line-height:18px;color:#11171C;">41.5s</div><div class="t" style="left:547.5px;top:327px;font-size:13px;line-height:18px;color:#11171C;">0.94625452520189…</div><div class="t" style="left:703.5px;top:327px;font-size:13px;line-height:18px;color:#11171C;">2.1</div><div class="t" style="left:858.4px;top:327px;font-size:13px;line-height:18px;color:#11171C;">50000</div><div class="t" style="left:958.5px;top:327px;font-size:13px;line-height:18px;color:#11171C;">11</div><div class="t" style="left:1058.4px;top:327px;font-size:13px;line-height:18px;color:#11171C;">261</div><div class="t" style="left:1158.5px;top:327px;font-size:13px;line-height:18px;color:#11171C;">softmax</div><div class="t" style="left:1258px;top:327px;font-size:13px;line-height:18px;color:#11171C;">0.0001354…</div><div class="t" style="left:1358px;top:327px;font-size:13px;line-height:18px;color:#11171C;">5</div><div class="t" style="left:1458px;top:327px;font-size:13px;line-height:18px;color:#11171C;">3</div><div class="t" style="left:1558.3px;top:327px;font-size:13px;line-height:18px;color:#11171C;">3</div><div class="b" style="left:42px;top:351px;width:1604px;height:1px;background:#D1D9E1"></div><div class="b" style="left:50px;top:360px;width:16px;height:16px;box-sizing:border-box;border:1px solid #C0CDD8;border-radius:3px;background:#fff"></div><div class="b" style="left:127px;top:362px;width:12px;height:12px;border-radius:50%;background:#1F272D;box-shadow:inset 0 0 0 1px rgba(0,0,0,0.07)"></div><div class="t" style="left:147.4px;top:359px;font-size:13.2px;line-height:18px;color:#2272B4;">trial_6db4d9ff</div><svg class="b" style="left:317px;top:360px" width="16" height="16" viewBox="0 0 16 16" fill="none"><circle cx="8" cy="8" r="7" stroke="#277C43" stroke-width="1.5"/><path d="M4.8 8.2 L7 10.3 L11.2 5.8" stroke="#277C43" stroke-width="1.5" fill="none"/></svg><div class="t" style="left:341.8px;top:360px;font-size:12.4px;line-height:17px;color:#11171C;">1 day ago</div><div class="t" style="left:467.5px;top:359px;font-size:13px;line-height:18px;color:#11171C;">43.6s</div><div class="t" style="left:547.5px;top:359px;font-size:13px;line-height:18px;color:#11171C;">0.97226399331662…</div><div class="t" style="left:703.5px;top:359px;font-size:13px;line-height:18px;color:#11171C;">2.1</div><div class="t" style="left:858.4px;top:359px;font-size:13px;line-height:18px;color:#11171C;">50000</div><div class="t" style="left:958.5px;top:359px;font-size:13px;line-height:18px;color:#11171C;">11</div><div class="t" style="left:1058.4px;top:359px;font-size:13px;line-height:18px;color:#11171C;">262</div><div class="t" style="left:1158.5px;top:359px;font-size:13px;line-height:18px;color:#11171C;">softmax</div><div class="t" style="left:1258px;top:359px;font-size:13px;line-height:18px;color:#11171C;">0.0008197…</div><div class="t" style="left:1358px;top:359px;font-size:13px;line-height:18px;color:#11171C;">5</div><div class="t" style="left:1458px;top:359px;font-size:13px;line-height:18px;color:#11171C;">3</div><div class="t" style="left:1558.3px;top:359px;font-size:13px;line-height:18px;color:#11171C;">3</div><div class="b" style="left:42px;top:383px;width:1604px;height:1px;background:#D1D9E1"></div><div class="b" style="left:50px;top:392px;width:16px;height:16px;box-sizing:border-box;border:1px solid #C0CDD8;border-radius:3px;background:#fff"></div><div class="b" style="left:127px;top:394px;width:12px;height:12px;border-radius:50%;background:#087A6E;box-shadow:inset 0 0 0 1px rgba(0,0,0,0.07)"></div><div class="t" style="left:147.4px;top:391px;font-size:13.2px;line-height:18px;color:#2272B4;">trial_55218288</div><svg class="b" style="left:317px;top:392px" width="16" height="16" viewBox="0 0 16 16" fill="none"><circle cx="8" cy="8" r="7" stroke="#277C43" stroke-width="1.5"/><path d="M4.8 8.2 L7 10.3 L11.2 5.8" stroke="#277C43" stroke-width="1.5" fill="none"/></svg><div class="t" style="left:341.8px;top:392px;font-size:12.4px;line-height:17px;color:#11171C;">1 day ago</div><div class="t" style="left:467.5px;top:391px;font-size:13px;line-height:18px;color:#11171C;">45.5s</div><div class="t" style="left:547.5px;top:391px;font-size:13px;line-height:18px;color:#11171C;">0.966193260930103</div><div class="t" style="left:703.5px;top:391px;font-size:13px;line-height:18px;color:#11171C;">2.1</div><div class="t" style="left:858.4px;top:391px;font-size:13px;line-height:18px;color:#11171C;">50000</div><div class="t" style="left:958.5px;top:391px;font-size:13px;line-height:18px;color:#11171C;">11</div><div class="t" style="left:1058.4px;top:391px;font-size:13px;line-height:18px;color:#11171C;">179</div><div class="t" style="left:1158.5px;top:391px;font-size:13px;line-height:18px;color:#11171C;">softmax</div><div class="t" style="left:1258px;top:391px;font-size:13px;line-height:18px;color:#11171C;">0.0007614…</div><div class="t" style="left:1358px;top:391px;font-size:13px;line-height:18px;color:#11171C;">6</div><div class="t" style="left:1458px;top:391px;font-size:13px;line-height:18px;color:#11171C;">1</div><div class="t" style="left:1558.3px;top:391px;font-size:13px;line-height:18px;color:#11171C;">6</div><div class="b" style="left:42px;top:415px;width:1604px;height:1px;background:#D1D9E1"></div><div class="b" style="left:50px;top:424px;width:16px;height:16px;box-sizing:border-box;border:1px solid #C0CDD8;border-radius:3px;background:#fff"></div><div class="b" style="left:127px;top:426px;width:12px;height:12px;border-radius:50%;background:#FACB66;box-shadow:inset 0 0 0 1px rgba(0,0,0,0.07)"></div><div class="t" style="left:147.4px;top:423px;font-size:13.2px;line-height:18px;color:#2272B4;">trial_9b98b3d2</div><svg class="b" style="left:317px;top:424px" width="16" height="16" viewBox="0 0 16 16" fill="none"><circle cx="8" cy="8" r="7" stroke="#277C43" stroke-width="1.5"/><path d="M4.8 8.2 L7 10.3 L11.2 5.8" stroke="#277C43" stroke-width="1.5" fill="none"/></svg><div class="t" style="left:341.8px;top:424px;font-size:12.4px;line-height:17px;color:#11171C;">1 day ago</div><div class="t" style="left:467.5px;top:423px;font-size:13px;line-height:18px;color:#11171C;">30.3s</div><div class="t" style="left:547.5px;top:423px;font-size:13px;line-height:18px;color:#11171C;">0.96786410470621</div><div class="t" style="left:703.5px;top:423px;font-size:13px;line-height:18px;color:#11171C;">2.29</div><div class="t" style="left:858.4px;top:423px;font-size:13px;line-height:18px;color:#11171C;">50000</div><div class="t" style="left:958.5px;top:423px;font-size:13px;line-height:18px;color:#11171C;">12</div><div class="t" style="left:1058.4px;top:423px;font-size:13px;line-height:18px;color:#11171C;">186</div><div class="t" style="left:1158.5px;top:423px;font-size:13px;line-height:18px;color:#11171C;">softmax</div><div class="t" style="left:1258px;top:423px;font-size:13px;line-height:18px;color:#11171C;">0.0007885…</div><div class="t" style="left:1358px;top:423px;font-size:13px;line-height:18px;color:#11171C;">7</div><div class="t" style="left:1458px;top:423px;font-size:13px;line-height:18px;color:#11171C;">3</div><div class="t" style="left:1558.3px;top:423px;font-size:13px;line-height:18px;color:#11171C;">5</div><div class="b" style="left:42px;top:447px;width:1604px;height:1px;background:#D1D9E1"></div><div class="b" style="left:50px;top:456px;width:16px;height:16px;box-sizing:border-box;border:1px solid #C0CDD8;border-radius:3px;background:#fff"></div><div class="b" style="left:127px;top:458px;width:12px;height:12px;border-radius:50%;background:#EFB987;box-shadow:inset 0 0 0 1px rgba(0,0,0,0.07)"></div><div class="t" style="left:147.4px;top:455px;font-size:13.2px;line-height:18px;color:#2272B4;">trial_21ff0139</div><svg class="b" style="left:317px;top:456px" width="16" height="16" viewBox="0 0 16 16" fill="none"><circle cx="8" cy="8" r="7" stroke="#277C43" stroke-width="1.5"/><path d="M4.8 8.2 L7 10.3 L11.2 5.8" stroke="#277C43" stroke-width="1.5" fill="none"/></svg><div class="t" style="left:341.8px;top:456px;font-size:12.4px;line-height:17px;color:#11171C;">1 day ago</div><div class="t" style="left:467.5px;top:455px;font-size:13px;line-height:18px;color:#11171C;">41.8s</div><div class="t" style="left:547.5px;top:455px;font-size:13px;line-height:18px;color:#11171C;">0.97304372041214…</div><div class="t" style="left:703.5px;top:455px;font-size:13px;line-height:18px;color:#11171C;">2.29</div><div class="t" style="left:858.4px;top:455px;font-size:13px;line-height:18px;color:#11171C;">50000</div><div class="t" style="left:958.5px;top:455px;font-size:13px;line-height:18px;color:#11171C;">12</div><div class="t" style="left:1058.4px;top:455px;font-size:13px;line-height:18px;color:#11171C;">253</div><div class="t" style="left:1158.5px;top:455px;font-size:13px;line-height:18px;color:#11171C;">softmax</div><div class="t" style="left:1258px;top:455px;font-size:13px;line-height:18px;color:#11171C;">0.0007911…</div><div class="t" style="left:1358px;top:455px;font-size:13px;line-height:18px;color:#11171C;">7</div><div class="t" style="left:1458px;top:455px;font-size:13px;line-height:18px;color:#11171C;">3</div><div class="t" style="left:1558.3px;top:455px;font-size:13px;line-height:18px;color:#11171C;">5</div><div class="b" style="left:42px;top:479px;width:1604px;height:1px;background:#D1D9E1"></div><div class="b" style="left:50px;top:488px;width:16px;height:16px;box-sizing:border-box;border:1px solid #C0CDD8;border-radius:3px;background:#fff"></div><div class="b" style="left:127px;top:490px;width:12px;height:12px;border-radius:50%;background:#8E6BC6;box-shadow:inset 0 0 0 1px rgba(0,0,0,0.07)"></div><div class="t" style="left:147.4px;top:487px;font-size:13.2px;line-height:18px;color:#2272B4;">trial_83649060</div><svg class="b" style="left:317px;top:488px" width="16" height="16" viewBox="0 0 16 16" fill="none"><circle cx="8" cy="8" r="7" stroke="#277C43" stroke-width="1.5"/><path d="M4.8 8.2 L7 10.3 L11.2 5.8" stroke="#277C43" stroke-width="1.5" fill="none"/></svg><div class="t" style="left:341.8px;top:488px;font-size:12.4px;line-height:17px;color:#11171C;">1 day ago</div><div class="t" style="left:467.5px;top:487px;font-size:13px;line-height:18px;color:#11171C;">31.5s</div><div class="t" style="left:547.5px;top:487px;font-size:13px;line-height:18px;color:#11171C;">0.96752993595098…</div><div class="t" style="left:703.5px;top:487px;font-size:13px;line-height:18px;color:#11171C;">2.29</div><div class="t" style="left:858.4px;top:487px;font-size:13px;line-height:18px;color:#11171C;">50000</div><div class="t" style="left:958.5px;top:487px;font-size:13px;line-height:18px;color:#11171C;">12</div><div class="t" style="left:1058.4px;top:487px;font-size:13px;line-height:18px;color:#11171C;">189</div><div class="t" style="left:1158.5px;top:487px;font-size:13px;line-height:18px;color:#11171C;">softmax</div><div class="t" style="left:1258px;top:487px;font-size:13px;line-height:18px;color:#11171C;">0.0007792…</div><div class="t" style="left:1358px;top:487px;font-size:13px;line-height:18px;color:#11171C;">7</div><div class="t" style="left:1458px;top:487px;font-size:13px;line-height:18px;color:#11171C;">3</div><div class="t" style="left:1558.3px;top:487px;font-size:13px;line-height:18px;color:#11171C;">5</div><div class="b" style="left:42px;top:511px;width:1604px;height:1px;background:#D1D9E1"></div><div class="b" style="left:50px;top:520px;width:16px;height:16px;box-sizing:border-box;border:1px solid #C0CDD8;border-radius:3px;background:#fff"></div><div class="b" style="left:127px;top:522px;width:12px;height:12px;border-radius:50%;background:#93320B;box-shadow:inset 0 0 0 1px rgba(0,0,0,0.07)"></div><div class="t" style="left:147.4px;top:519px;font-size:13.2px;line-height:18px;color:#2272B4;">trial_cd28c21f</div><svg class="b" style="left:317px;top:520px" width="16" height="16" viewBox="0 0 16 16" fill="none"><circle cx="8" cy="8" r="7" stroke="#277C43" stroke-width="1.5"/><path d="M4.8 8.2 L7 10.3 L11.2 5.8" stroke="#277C43" stroke-width="1.5" fill="none"/></svg><div class="t" style="left:341.8px;top:520px;font-size:12.4px;line-height:17px;color:#11171C;">1 day ago</div><div class="t" style="left:467.5px;top:519px;font-size:13px;line-height:18px;color:#11171C;">38.1s</div><div class="t" style="left:547.5px;top:519px;font-size:13px;line-height:18px;color:#11171C;">0.97042606516290…</div><div class="t" style="left:703.5px;top:519px;font-size:13px;line-height:18px;color:#11171C;">2.29</div><div class="t" style="left:858.4px;top:519px;font-size:13px;line-height:18px;color:#11171C;">50000</div><div class="t" style="left:958.5px;top:519px;font-size:13px;line-height:18px;color:#11171C;">12</div><div class="t" style="left:1058.4px;top:519px;font-size:13px;line-height:18px;color:#11171C;">235</div><div class="t" style="left:1158.5px;top:519px;font-size:13px;line-height:18px;color:#11171C;">softmax</div><div class="t" style="left:1258px;top:519px;font-size:13px;line-height:18px;color:#11171C;">0.0007965…</div><div class="t" style="left:1358px;top:519px;font-size:13px;line-height:18px;color:#11171C;">7</div><div class="t" style="left:1458px;top:519px;font-size:13px;line-height:18px;color:#11171C;">2</div><div class="t" style="left:1558.3px;top:519px;font-size:13px;line-height:18px;color:#11171C;">5</div><div class="b" style="left:42px;top:543px;width:1604px;height:1px;background:#D1D9E1"></div><div class="b" style="left:50px;top:552px;width:16px;height:16px;box-sizing:border-box;border:1px solid #C0CDD8;border-radius:3px;background:#fff"></div><div class="b" style="left:127px;top:554px;width:12px;height:12px;border-radius:50%;background:#A6630C;box-shadow:inset 0 0 0 1px rgba(0,0,0,0.07)"></div><div class="t" style="left:147.4px;top:551px;font-size:13.2px;line-height:18px;color:#2272B4;">trial_29978483</div><svg class="b" style="left:317px;top:552px" width="16" height="16" viewBox="0 0 16 16" fill="none"><circle cx="8" cy="8" r="7" stroke="#277C43" stroke-width="1.5"/><path d="M4.8 8.2 L7 10.3 L11.2 5.8" stroke="#277C43" stroke-width="1.5" fill="none"/></svg><div class="t" style="left:341.8px;top:552px;font-size:12.4px;line-height:17px;color:#11171C;">1 day ago</div><div class="t" style="left:467.5px;top:551px;font-size:13px;line-height:18px;color:#11171C;">44.4s</div><div class="t" style="left:547.5px;top:551px;font-size:13px;line-height:18px;color:#11171C;">0.97538290169869…</div><div class="t" style="left:703.5px;top:551px;font-size:13px;line-height:18px;color:#11171C;">2.29</div><div class="t" style="left:858.4px;top:551px;font-size:13px;line-height:18px;color:#11171C;">50000</div><div class="t" style="left:958.5px;top:551px;font-size:13px;line-height:18px;color:#11171C;">12</div><div class="t" style="left:1058.4px;top:551px;font-size:13px;line-height:18px;color:#11171C;">290</div><div class="t" style="left:1158.5px;top:551px;font-size:13px;line-height:18px;color:#11171C;">softmax</div><div class="t" style="left:1258px;top:551px;font-size:13px;line-height:18px;color:#11171C;">0.0007837…</div><div class="t" style="left:1358px;top:551px;font-size:13px;line-height:18px;color:#11171C;">5</div><div class="t" style="left:1458px;top:551px;font-size:13px;line-height:18px;color:#11171C;">2</div><div class="t" style="left:1558.3px;top:551px;font-size:13px;line-height:18px;color:#11171C;">3</div><div class="b" style="left:42px;top:575px;width:1604px;height:1px;background:#D1D9E1"></div><div class="b" style="left:50px;top:584px;width:16px;height:16px;box-sizing:border-box;border:1px solid #C0CDD8;border-radius:3px;background:#fff"></div><div class="b" style="left:127px;top:586px;width:12px;height:12px;border-radius:50%;background:#EFB987;box-shadow:inset 0 0 0 1px rgba(0,0,0,0.07)"></div><div class="t" style="left:147.4px;top:583px;font-size:13.2px;line-height:18px;color:#2272B4;">trial_8597cbfd</div><svg class="b" style="left:317px;top:584px" width="16" height="16" viewBox="0 0 16 16" fill="none"><circle cx="8" cy="8" r="7" stroke="#277C43" stroke-width="1.5"/><path d="M4.8 8.2 L7 10.3 L11.2 5.8" stroke="#277C43" stroke-width="1.5" fill="none"/></svg><div class="t" style="left:341.8px;top:584px;font-size:12.4px;line-height:17px;color:#11171C;">1 day ago</div><div class="t" style="left:467.5px;top:583px;font-size:13px;line-height:18px;color:#11171C;">17.9s</div><div class="t" style="left:547.5px;top:583px;font-size:13px;line-height:18px;color:#11171C;">0.94631021999443…</div><div class="t" style="left:703.5px;top:583px;font-size:13px;line-height:18px;color:#11171C;">2.29</div><div class="t" style="left:858.4px;top:583px;font-size:13px;line-height:18px;color:#11171C;">50000</div><div class="t" style="left:958.5px;top:583px;font-size:13px;line-height:18px;color:#11171C;">12</div><div class="t" style="left:1058.4px;top:583px;font-size:13px;line-height:18px;color:#11171C;">67</div><div class="t" style="left:1158.5px;top:583px;font-size:13px;line-height:18px;color:#11171C;">softmax</div><div class="t" style="left:1258px;top:583px;font-size:13px;line-height:18px;color:#11171C;">0.0004833…</div><div class="t" style="left:1358px;top:583px;font-size:13px;line-height:18px;color:#11171C;">4</div><div class="t" style="left:1458px;top:583px;font-size:13px;line-height:18px;color:#11171C;">3</div><div class="t" style="left:1558.3px;top:583px;font-size:13px;line-height:18px;color:#11171C;">3</div><div class="b" style="left:42px;top:607px;width:1604px;height:1px;background:#D1D9E1"></div><div class="b" style="left:50px;top:616px;width:16px;height:16px;box-sizing:border-box;border:1px solid #C0CDD8;border-radius:3px;background:#fff"></div><div class="b" style="left:127px;top:618px;width:12px;height:12px;border-radius:50%;background:#277C43;box-shadow:inset 0 0 0 1px rgba(0,0,0,0.07)"></div><div class="t" style="left:147.4px;top:615px;font-size:13.2px;line-height:18px;color:#2272B4;">trial_4e090298</div><svg class="b" style="left:317px;top:616px" width="16" height="16" viewBox="0 0 16 16" fill="none"><circle cx="8" cy="8" r="7" stroke="#277C43" stroke-width="1.5"/><path d="M4.8 8.2 L7 10.3 L11.2 5.8" stroke="#277C43" stroke-width="1.5" fill="none"/></svg><div class="t" style="left:341.8px;top:616px;font-size:12.4px;line-height:17px;color:#11171C;">1 day ago</div><div class="t" style="left:467.5px;top:615px;font-size:13px;line-height:18px;color:#11171C;">16.2s</div><div class="t" style="left:547.5px;top:615px;font-size:13px;line-height:18px;color:#11171C;">0.94319131161236…</div><div class="t" style="left:703.5px;top:615px;font-size:13px;line-height:18px;color:#11171C;">2.29</div><div class="t" style="left:858.4px;top:615px;font-size:13px;line-height:18px;color:#11171C;">50000</div><div class="t" style="left:958.5px;top:615px;font-size:13px;line-height:18px;color:#11171C;">12</div><div class="t" style="left:1058.4px;top:615px;font-size:13px;line-height:18px;color:#11171C;">63</div><div class="t" style="left:1158.5px;top:615px;font-size:13px;line-height:18px;color:#11171C;">softmax</div><div class="t" style="left:1258px;top:615px;font-size:13px;line-height:18px;color:#11171C;">0.0004455…</div><div class="t" style="left:1358px;top:615px;font-size:13px;line-height:18px;color:#11171C;">4</div><div class="t" style="left:1458px;top:615px;font-size:13px;line-height:18px;color:#11171C;">2</div><div class="t" style="left:1558.3px;top:615px;font-size:13px;line-height:18px;color:#11171C;">4</div><div class="b" style="left:42px;top:639px;width:1604px;height:1px;background:#D1D9E1"></div><div class="b" style="left:50px;top:648px;width:16px;height:16px;box-sizing:border-box;border:1px solid #C0CDD8;border-radius:3px;background:#fff"></div><div class="b" style="left:127px;top:650px;width:12px;height:12px;border-radius:50%;background:#8ACAFF;box-shadow:inset 0 0 0 1px rgba(0,0,0,0.07)"></div><div class="t" style="left:147.4px;top:647px;font-size:13.2px;line-height:18px;color:#2272B4;">trial_659f2084</div><svg class="b" style="left:317px;top:648px" width="16" height="16" viewBox="0 0 16 16" fill="none"><circle cx="8" cy="8" r="7" stroke="#277C43" stroke-width="1.5"/><path d="M4.8 8.2 L7 10.3 L11.2 5.8" stroke="#277C43" stroke-width="1.5" fill="none"/></svg><div class="t" style="left:341.8px;top:648px;font-size:12.4px;line-height:17px;color:#11171C;">1 day ago</div><div class="t" style="left:467.5px;top:647px;font-size:13px;line-height:18px;color:#11171C;">16.7s</div><div class="t" style="left:547.5px;top:647px;font-size:13px;line-height:18px;color:#11171C;">0.94374825953773…</div><div class="t" style="left:703.5px;top:647px;font-size:13px;line-height:18px;color:#11171C;">2.29</div><div class="t" style="left:858.4px;top:647px;font-size:13px;line-height:18px;color:#11171C;">50000</div><div class="t" style="left:958.5px;top:647px;font-size:13px;line-height:18px;color:#11171C;">12</div><div class="t" style="left:1058.4px;top:647px;font-size:13px;line-height:18px;color:#11171C;">65</div><div class="t" style="left:1158.5px;top:647px;font-size:13px;line-height:18px;color:#11171C;">softmax</div><div class="t" style="left:1258px;top:647px;font-size:13px;line-height:18px;color:#11171C;">0.0004242…</div><div class="t" style="left:1358px;top:647px;font-size:13px;line-height:18px;color:#11171C;">6</div><div class="t" style="left:1458px;top:647px;font-size:13px;line-height:18px;color:#11171C;">3</div><div class="t" style="left:1558.3px;top:647px;font-size:13px;line-height:18px;color:#11171C;">4</div><div class="b" style="left:42px;top:671px;width:1604px;height:1px;background:#D1D9E1"></div><div class="b" style="left:50px;top:680px;width:16px;height:16px;box-sizing:border-box;border:1px solid #C0CDD8;border-radius:3px;background:#fff"></div><div class="b" style="left:127px;top:682px;width:12px;height:12px;border-radius:50%;background:#1A7DAA;box-shadow:inset 0 0 0 1px rgba(0,0,0,0.07)"></div><div class="t" style="left:147.4px;top:679px;font-size:13.2px;line-height:18px;color:#2272B4;">trial_e67e08ba</div><svg class="b" style="left:317px;top:680px" width="16" height="16" viewBox="0 0 16 16" fill="none"><circle cx="8" cy="8" r="7" stroke="#277C43" stroke-width="1.5"/><path d="M4.8 8.2 L7 10.3 L11.2 5.8" stroke="#277C43" stroke-width="1.5" fill="none"/></svg><div class="t" style="left:341.8px;top:680px;font-size:12.4px;line-height:17px;color:#11171C;">1 day ago</div><div class="t" style="left:467.5px;top:679px;font-size:13px;line-height:18px;color:#11171C;">1.2min</div><div class="t" style="left:547.5px;top:679px;font-size:13px;line-height:18px;color:#11171C;">0.96630465051517…</div><div class="t" style="left:703.5px;top:679px;font-size:13px;line-height:18px;color:#11171C;">2.29</div><div class="t" style="left:858.4px;top:679px;font-size:13px;line-height:18px;color:#11171C;">50000</div><div class="t" style="left:958.5px;top:679px;font-size:13px;line-height:18px;color:#11171C;">12</div><div class="t" style="left:1058.4px;top:679px;font-size:13px;line-height:18px;color:#11171C;">295</div><div class="t" style="left:1158.5px;top:679px;font-size:13px;line-height:18px;color:#11171C;">softmax</div><div class="t" style="left:1258px;top:679px;font-size:13px;line-height:18px;color:#11171C;">0.0004267…</div><div class="t" style="left:1358px;top:679px;font-size:13px;line-height:18px;color:#11171C;">9</div><div class="t" style="left:1458px;top:679px;font-size:13px;line-height:18px;color:#11171C;">2</div><div class="t" style="left:1558.3px;top:679px;font-size:13px;line-height:18px;color:#11171C;">4</div><div class="b" style="left:42px;top:703px;width:1604px;height:1px;background:#D1D9E1"></div><div class="b" style="left:50px;top:712px;width:16px;height:16px;box-sizing:border-box;border:1px solid #C0CDD8;border-radius:3px;background:#fff"></div><div class="b" style="left:127px;top:714px;width:12px;height:12px;border-radius:50%;background:#2272B4;box-shadow:inset 0 0 0 1px rgba(0,0,0,0.07)"></div><div class="t" style="left:147.4px;top:711px;font-size:13.2px;line-height:18px;color:#2272B4;">trial_97806134</div><svg class="b" style="left:317px;top:712px" width="16" height="16" viewBox="0 0 16 16" fill="none"><circle cx="8" cy="8" r="7" stroke="#277C43" stroke-width="1.5"/><path d="M4.8 8.2 L7 10.3 L11.2 5.8" stroke="#277C43" stroke-width="1.5" fill="none"/></svg><div class="t" style="left:341.8px;top:712px;font-size:12.4px;line-height:17px;color:#11171C;">1 day ago</div><div class="t" style="left:467.5px;top:711px;font-size:13px;line-height:18px;color:#11171C;">27.7s</div><div class="t" style="left:547.5px;top:711px;font-size:13px;line-height:18px;color:#11171C;">0.96246170983013…</div><div class="t" style="left:703.5px;top:711px;font-size:13px;line-height:18px;color:#11171C;">2.29</div><div class="t" style="left:858.4px;top:711px;font-size:13px;line-height:18px;color:#11171C;">50000</div><div class="t" style="left:958.5px;top:711px;font-size:13px;line-height:18px;color:#11171C;">12</div><div class="t" style="left:1058.4px;top:711px;font-size:13px;line-height:18px;color:#11171C;">112</div><div class="t" style="left:1158.5px;top:711px;font-size:13px;line-height:18px;color:#11171C;">softmax</div><div class="t" style="left:1258px;top:711px;font-size:13px;line-height:18px;color:#11171C;">0.0008098…</div><div class="t" style="left:1358px;top:711px;font-size:13px;line-height:18px;color:#11171C;">6</div><div class="t" style="left:1458px;top:711px;font-size:13px;line-height:18px;color:#11171C;">3</div><div class="t" style="left:1558.3px;top:711px;font-size:13px;line-height:18px;color:#11171C;">3</div><div class="b" style="left:42px;top:735px;width:1604px;height:1px;background:#D1D9E1"></div><div class="b" style="left:50px;top:744px;width:16px;height:16px;box-sizing:border-box;border:1px solid #C0CDD8;border-radius:3px;background:#fff"></div><div class="b" style="left:127px;top:746px;width:12px;height:12px;border-radius:50%;background:#8ACAFF;box-shadow:inset 0 0 0 1px rgba(0,0,0,0.07)"></div><div class="t" style="left:147.4px;top:743px;font-size:13.2px;line-height:18px;color:#2272B4;">trial_fef2cf60</div><svg class="b" style="left:317px;top:744px" width="16" height="16" viewBox="0 0 16 16" fill="none"><circle cx="8" cy="8" r="7" stroke="#277C43" stroke-width="1.5"/><path d="M4.8 8.2 L7 10.3 L11.2 5.8" stroke="#277C43" stroke-width="1.5" fill="none"/></svg><div class="t" style="left:341.8px;top:744px;font-size:12.4px;line-height:17px;color:#11171C;">1 day ago</div><div class="t" style="left:467.5px;top:743px;font-size:13px;line-height:18px;color:#11171C;">47.3s</div><div class="t" style="left:547.5px;top:743px;font-size:13px;line-height:18px;color:#11171C;">0.97655249234196…</div><div class="t" style="left:703.5px;top:743px;font-size:13px;line-height:18px;color:#11171C;">2.48</div><div class="t" style="left:858.4px;top:743px;font-size:13px;line-height:18px;color:#11171C;">50000</div><div class="t" style="left:958.5px;top:743px;font-size:13px;line-height:18px;color:#11171C;">13</div><div class="t" style="left:1058.4px;top:743px;font-size:13px;line-height:18px;color:#11171C;">293</div><div class="t" style="left:1158.5px;top:743px;font-size:13px;line-height:18px;color:#11171C;">softmax</div><div class="t" style="left:1258px;top:743px;font-size:13px;line-height:18px;color:#11171C;">0.0008608…</div><div class="t" style="left:1358px;top:743px;font-size:13px;line-height:18px;color:#11171C;">4</div><div class="t" style="left:1458px;top:743px;font-size:13px;line-height:18px;color:#11171C;">3</div><div class="t" style="left:1558.3px;top:743px;font-size:13px;line-height:18px;color:#11171C;">3</div></div><div class="b" style="left:42px;top:1044px;width:1860px;height:1px;background:#D1D9E1"></div><svg class="b" style="left:1670px;top:655px" width="18" height="18" viewBox="0 0 18 18" fill="none"><circle cx="9" cy="9" r="7.3" stroke="#5F7281" stroke-width="1.4"/><path d="M9 5.2 V12.8 M5.2 9 H12.8" stroke="#5F7281" stroke-width="1.4"/></svg><div class="t" style="left:1710.5px;top:646px;font-size:13.2px;line-height:18px;color:#5F7281;">Show more</div><div class="t" style="left:1689.5px;top:665px;font-size:13.6px;line-height:19px;color:#5F7281;">columns (16 total)</div><div class="t" style="left:42.6px;top:1049px;font-size:12.5px;line-height:18px;color:#11171C;font-weight:700;">71</div><div class="t" style="left:61.7px;top:1049px;font-size:12.7px;line-height:18px;color:#11171C;">matching runs</div>
</body></html>
